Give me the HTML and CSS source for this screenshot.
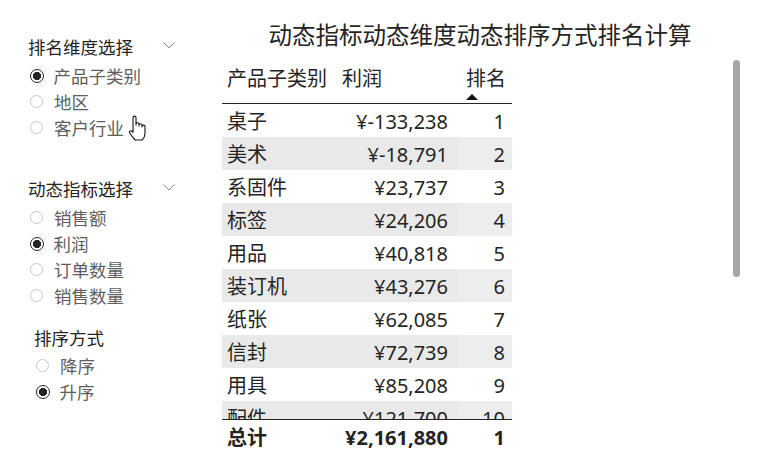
FILE: index.html
```html
<!DOCTYPE html>
<html lang="zh">
<head>
<meta charset="utf-8">
<link rel="stylesheet" href="styles.css">
</head>
<body>
<div class="page">
  <aside class="slicers">
    <section class="slicer">
      <div class="slicer-head"><span>排名维度选择</span><svg class="chev" viewBox="0 0 12 7" width="12" height="7"><polyline points="0.5,0.5 6,6 11.5,0.5" fill="none" stroke="#8a8886" stroke-width="1"/></svg></div>
      <ul class="opts">
        <li class="opt on"><span class="radio"></span>产品子类别</li>
        <li class="opt"><span class="radio"></span>地区</li>
        <li class="opt"><span class="radio"></span>客户行业</li>
      </ul>
    </section>
    <section class="slicer s2">
      <div class="slicer-head"><span>动态指标选择</span><svg class="chev" viewBox="0 0 12 7" width="12" height="7"><polyline points="0.5,0.5 6,6 11.5,0.5" fill="none" stroke="#8a8886" stroke-width="1"/></svg></div>
      <ul class="opts">
        <li class="opt"><span class="radio"></span>销售额</li>
        <li class="opt on"><span class="radio"></span>利润</li>
        <li class="opt"><span class="radio"></span>订单数量</li>
        <li class="opt"><span class="radio"></span>销售数量</li>
      </ul>
    </section>
    <section class="slicer s3">
      <div class="slicer-head"><span>排序方式</span></div>
      <ul class="opts">
        <li class="opt"><span class="radio"></span>降序</li>
        <li class="opt on"><span class="radio"></span>升序</li>
      </ul>
    </section>
    <svg class="cursor" viewBox="0 0 19 27" width="19" height="27"><path d="M5,13 V2.6 a1.5,1.5 0 0 1 3,0 V10 V9.2 a1.5,1.5 0 0 1 3,0 V11 V10.2 a1.5,1.5 0 0 1 3,0 V12 V11.6 a1.5,1.5 0 0 1 3,0 V18.5 c0,3 -1.3,5 -2.8,6.5 H7.2 c-1.6,-1.6 -4,-4.6 -5.6,-7.2 c-0.8,-1.3 0.6,-2.6 1.9,-1.8 L5,17.2 Z" fill="#fff" stroke="#111" stroke-width="1.1" stroke-linejoin="round"/></svg>
  </aside>
  <main class="visual">
    <h1 class="title">动态指标动态维度动态排序方式排名计算</h1>
    <div class="visual-body">
      <div class="table">
        <div class="row head">
          <div class="c1">产品子类别</div>
          <div class="c2 left">利润</div>
          <div class="c3 left">排名<span class="sort"></span></div>
        </div>
        <div class="rows">
          <div class="row"><div class="c1">桌子</div><div class="c2">¥-133,238</div><div class="c3">1</div></div>
          <div class="row alt"><div class="c1">美术</div><div class="c2">¥-18,791</div><div class="c3">2</div></div>
          <div class="row"><div class="c1">系固件</div><div class="c2">¥23,737</div><div class="c3">3</div></div>
          <div class="row alt"><div class="c1">标签</div><div class="c2">¥24,206</div><div class="c3">4</div></div>
          <div class="row"><div class="c1">用品</div><div class="c2">¥40,818</div><div class="c3">5</div></div>
          <div class="row alt"><div class="c1">装订机</div><div class="c2">¥43,276</div><div class="c3">6</div></div>
          <div class="row"><div class="c1">纸张</div><div class="c2">¥62,085</div><div class="c3">7</div></div>
          <div class="row alt"><div class="c1">信封</div><div class="c2">¥72,739</div><div class="c3">8</div></div>
          <div class="row"><div class="c1">用具</div><div class="c2">¥85,208</div><div class="c3">9</div></div>
          <div class="row alt"><div class="c1">配件</div><div class="c2">¥121,700</div><div class="c3">10</div></div>
        </div>
        <div class="row total">
          <div class="c1">总计</div><div class="c2">¥2,161,880</div><div class="c3">1</div>
        </div>
      </div>
      <div class="scrollbar"></div>
    </div>
  </main>
</div>
</body>
</html>
```
FILE: styles.css
```css
* { box-sizing: border-box; }
html, body { margin: 0; padding: 0; background: #fff; }
body {
  width: 760px; height: 464px; overflow: hidden;
  font-family: "Noto Sans", "Noto Sans CJK SC", sans-serif;
  color: #252423;
}
.page { display: flex; height: 464px; }

.slicers { position: relative; width: 222px; flex: none; padding: 35px 0 0 28px; }
.slicer-head {
  width: 150px; height: 24px; line-height: 24px; font-size: 17.5px;
  display: flex; align-items: center; justify-content: space-between;
  color: #252423;
}
.chev { margin-right: 3px; margin-top: -3px; }
.opts { list-style: none; margin: 3px 0 0; padding: 0; }
.opt {
  height: 26px; line-height: 26px; font-size: 17.5px; color: #605e5c;
  display: flex; align-items: center; padding-top: 1px;
}
.radio {
  width: 13px; height: 13px; border-radius: 50%;
  border: 1px solid #c8c6c4; margin: 0 11px 0 2px; flex: none; background: #fff;
}
.opt.on .radio { width: 14px; height: 14px; margin: 0 10px 0 1.5px; border: 1.6px solid #252423; background: radial-gradient(circle, #252423 0 3.8px, #fff 4.4px); }
.s2 { margin-top: 37px; }
.s3 { margin-top: 18px; padding-left: 6px; }
.s3 .opts { margin-top: 2px; }
.cursor { position: absolute; left: 128px; top: 115px; }

.visual { flex: 1; padding-top: 20px; }
.title {
  margin: 0; padding-right: 22px; text-align: center;
  font-size: 23.5px; font-weight: normal; line-height: 30px; color: #252423;
}
.visual-body { display: flex; margin-top: 10px; }
.table { width: 290px; margin-top: 5px; font-size: 20px; }
.row { display: grid; grid-template-columns: 115px 121px 54px; height: 33px; line-height: 31px; white-space: nowrap; }
.row > div { overflow: hidden; padding-top: 2px; }
.c1 { padding-left: 5px; }
.c2 { text-align: right; padding-right: 10px; }
.c3 { text-align: right; padding-right: 7px; }
.c2.left { text-align: left; padding-left: 5px; }
.c3.left { text-align: left; padding-left: 8px; position: relative; overflow: visible; }
.row.head { height: 39px; line-height: 24px; border-bottom: 1px solid #252423; }
.sort {
  position: absolute; left: 8px; top: 29px; width: 0; height: 0;
  border-left: 6px solid transparent; border-right: 6px solid transparent;
  border-bottom: 6px solid #111;
}
.rows { height: 315px; overflow: hidden; }
.row.alt { background: #e9e9ea; }
.row.alt .c3 { background: #ededee; }
.row.total { height: 35px; line-height: 32px; border-top: 1.5px solid #252423; font-weight: bold; }
.scrollbar { width: 7px; height: 217px; border-radius: 4px; background: #a6a6a6; margin-left: 221px; }
```
